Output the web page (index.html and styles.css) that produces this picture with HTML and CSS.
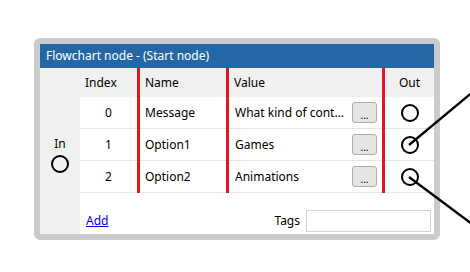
FILE: index.html
```html
<!DOCTYPE html>
<html lang="en">
<head>
    <meta charset="UTF-8">
    <title>Flowchart node</title>
    <link rel="stylesheet" href="styles.css">
</head>
<body>
    <div class="node">
        <div class="node-title">Flowchart node - (Start node)</div>
        <div class="node-body">
            <div class="node-in">
                <span>In</span>
                <span class="pin"></span>
            </div>
            <div class="node-main">
                <div class="row head">
                    <div class="cell">Index</div>
                    <div class="cell">Name</div>
                    <div class="cell">Value</div>
                    <div class="cell center">Out</div>
                </div>
                <div class="row">
                    <div class="cell center">0</div>
                    <div class="cell">Message</div>
                    <div class="cell value"><span class="text">What kind of content do you like?</span><button class="dots">...</button></div>
                    <div class="cell center"><span class="pin"></span></div>
                </div>
                <div class="row">
                    <div class="cell center">1</div>
                    <div class="cell">Option1</div>
                    <div class="cell value"><span class="text">Games</span><button class="dots">...</button></div>
                    <div class="cell center"><span class="pin"></span></div>
                </div>
                <div class="row">
                    <div class="cell center">2</div>
                    <div class="cell">Option2</div>
                    <div class="cell value"><span class="text">Animations</span><button class="dots">...</button></div>
                    <div class="cell center"><span class="pin"></span></div>
                </div>
                <div class="node-foot">
                    <a href="#">Add</a>
                    <label for="tags">Tags</label>
                    <input type="text" id="tags">
                </div>
            </div>
        </div>
    </div>

    <!-- connections to other nodes -->
    <svg class="wires" width="470" height="272">
        <line x1="409" y1="145" x2="480" y2="86" />
        <line x1="409" y1="177" x2="480" y2="230" />
    </svg>
</body>
</html>
```

FILE: styles.css
```css
body {
    font-family: "Noto Sans", "Open Sans", sans-serif;
    font-size: 12px;
    color: #000;
    margin: 0;
    padding: 0;
    background: #fff;
}
.node {
    margin: 38px 0 0 34px;
    width: 394px;
    height: 190px;
    border: 6px solid #cbcbcb;
    border-radius: 6px;
    display: flex;
    flex-direction: column;
    background: #fff;
}
.node-title {
    height: 24px;
    line-height: 24px;
    padding-left: 6px;
    background: #2467a7;
    color: #fff;
}
.node-body {
    flex: 1;
    display: flex;
}
.node-in {
    width: 40px;
    background: #f0f0f0;
    display: flex;
    flex-direction: column;
    align-items: center;
    justify-content: center;
    gap: 3px;
    padding-top: 6px;
}
.node-main {
    flex: 1;
    display: flex;
    flex-direction: column;
}
.row {
    display: grid;
    grid-template-columns: 57px 86px 153px 1fr;
    column-gap: 3px;
    background: #e3161f;
    height: 32px;
}
.row.head {
    height: 29px;
}
.cell {
    display: flex;
    align-items: center;
    padding-left: 5px;
    background: #fff;
    border-bottom: 1px solid #e6e6e6;
    white-space: nowrap;
    overflow: hidden;
}
.head .cell {
    background: #f0f0f0;
    border-bottom: none;
}
.cell.center {
    justify-content: center;
    padding-left: 0;
}
.cell.value {
    padding: 0 5px 0 6px;
    gap: 2px;
}
.value .text {
    flex: 1;
    overflow: hidden;
    text-overflow: ellipsis;
}
.dots {
    width: 25px;
    height: 21px;
    flex: none;
    padding: 5px 0 0;
    font-family: inherit;
    font-size: 10px;
    line-height: 12px;
    background: #e6e6e6;
    border: 1px solid #adadad;
    border-radius: 3px;
}
.pin {
    width: 14px;
    height: 14px;
    border: 2px solid #000;
    border-radius: 50%;
    background: transparent;
}
.node-foot {
    flex: 1;
    display: flex;
    align-items: center;
    padding: 14px 3px 0 6px;
}
.node-foot a {
    color: #0000ee;
    text-decoration: underline;
    margin-right: auto;
}
.node-foot label {
    margin-right: 6px;
}
.node-foot input {
    width: 125px;
    height: 22px;
    box-sizing: border-box;
    border: 1px solid #d4d4d4;
    padding: 0 4px;
}
.wires {
    position: absolute;
    left: 0;
    top: 0;
    pointer-events: none;
}
.wires line {
    stroke: #000;
    stroke-width: 2.4;
}
```
